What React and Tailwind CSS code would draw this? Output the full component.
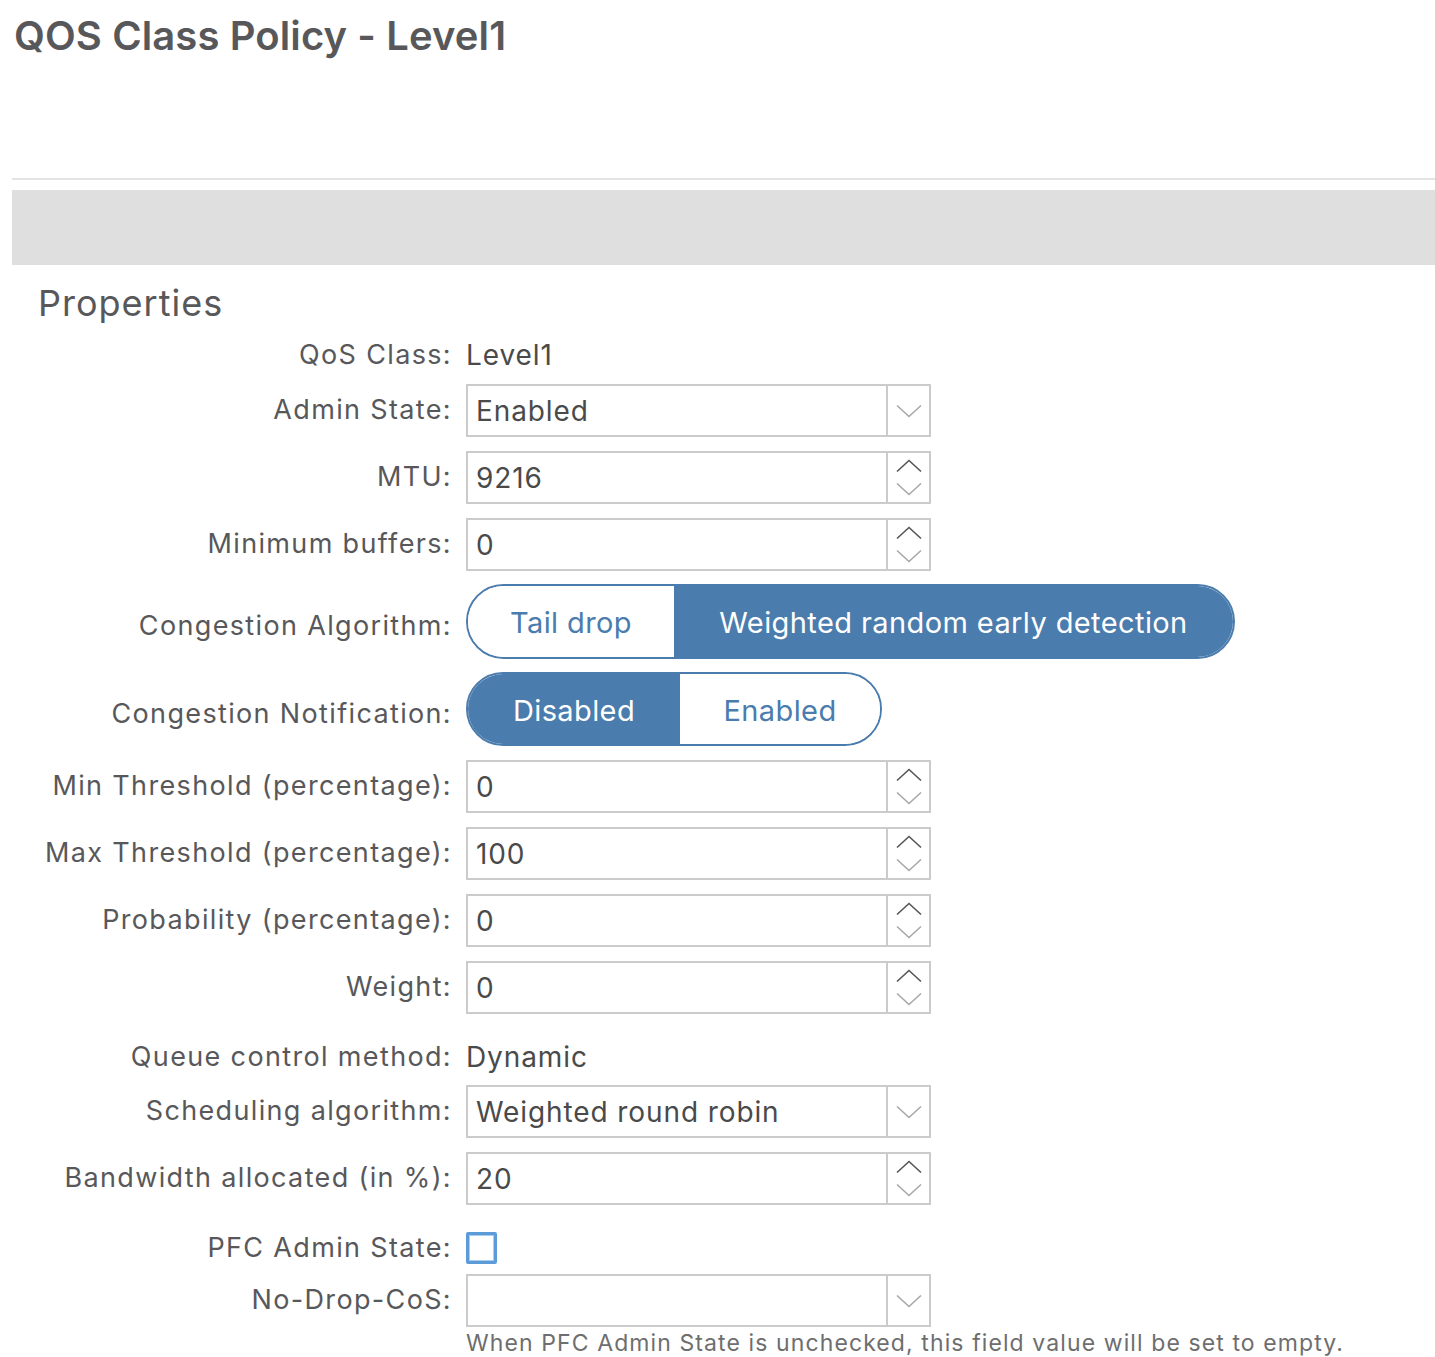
import React from "react";

const Chevron = ({ dir = "down", color = "#a8a8a8" }) => (
  <svg width="26" height="14" viewBox="0 0 26 14" fill="none">
    {dir === "down" ? (
      <path d="M1 1.5 L13 12.5 L25 1.5" stroke={color} strokeWidth="1.6" />
    ) : (
      <path d="M1 12.5 L13 1.5 L25 12.5" stroke={color} strokeWidth="1.6" />
    )}
  </svg>
);

const Row = ({ label, children, className = "", labelClass = "" }) => (
  <div className={`grid grid-cols-[452px_1fr] gap-x-[14px] items-center ${className}`}>
    <div className={`text-right text-[27px] text-[#58585b] tracking-[1.35px] whitespace-nowrap ${labelClass}`}>{label}</div>
    <div className="flex items-center">{children}</div>
  </div>
);

const Select = ({ value }) => (
  <div className="flex h-[53px] w-[465px] border-2 border-[#cbcbcb] bg-white">
    <div className="flex-1 flex items-center pl-[8px] text-[28px] text-[#4a4a4a] tracking-[0.9px]">{value}</div>
    <div className="w-[43px] border-l-2 border-[#cbcbcb] flex items-center justify-center">
      <Chevron dir="down" />
    </div>
  </div>
);

const Spin = ({ value }) => (
  <div className="flex h-[53px] w-[465px] border-2 border-[#cbcbcb] bg-white">
    <div className="flex-1 flex items-center pl-[8px] text-[28px] text-[#4a4a4a] tracking-[0.9px]">{value}</div>
    <div className="w-[43px] border-l-2 border-[#cbcbcb] flex flex-col items-center justify-center gap-[9px]">
      <Chevron dir="up" color="#555555" />
      <Chevron dir="down" color="#a8a8a8" />
    </div>
  </div>
);

const Toggle = ({ items, active, h }) => (
  <div className={`flex ${h} border-2 border-[#4a7cad] rounded-full overflow-hidden`}>
    {items.map((it, i) => (
      <div
        key={i}
        className={`${it.w} flex items-center justify-center pt-[3px] text-[29px] tracking-[0.4px] ${
          i === active ? "bg-[#4a7cad] text-white" : "bg-white text-[#4a7cad]"
        }`}
      >
        {it.label}
      </div>
    ))}
  </div>
);

export default function App() {
  return (
    <div className="font-['Inter',sans-serif] bg-white w-[1435px] h-[1357px] overflow-hidden">
      <div className="pl-[12px]">
        <div className="h-[178px] pl-[2px]">
          <h1 className="text-[40px] font-semibold text-[#58585b] leading-[72px] tracking-[0.1px]">
            QOS Class Policy - Level1
          </h1>
        </div>
        <div className="h-[2px] bg-[#e3e3e3]" />
        <div className="h-[10px]" />
        <div className="h-[75px] bg-[#dfdfdf]" />
        <div className="pl-[26px] mt-[18px] h-[40px] flex items-center text-[36px] text-[#58585b] tracking-[1px]">
          Properties
        </div>
      </div>

      <div className="flex flex-col">
        <Row label="QoS Class:" className="mt-[11px] h-[34px]">
          <span className="text-[28px] text-[#4a4a4a] tracking-[0.9px]">Level1</span>
        </Row>
        <Row label="Admin State:" className="mt-[16px]">
          <Select value="Enabled" />
        </Row>
        <Row label="MTU:" className="mt-[14px]">
          <Spin value="9216" />
        </Row>
        <Row label="Minimum buffers:" className="mt-[14px]">
          <Spin value="0" />
        </Row>
        <Row label="Congestion Algorithm:" className="mt-[13px]" labelClass="pt-[10px]">
          <Toggle
            h="h-[75px]"
            active={1}
            items={[
              { label: "Tail drop", w: "w-[206px]" },
              { label: "Weighted random early detection", w: "w-[559px]" },
            ]}
          />
        </Row>
        <Row label="Congestion Notification:" className="mt-[13px]" labelClass="pt-[10px]">
          <Toggle
            h="h-[74px]"
            active={0}
            items={[
              { label: "Disabled", w: "w-[212px]" },
              { label: "Enabled", w: "w-[200px]" },
            ]}
          />
        </Row>
        <Row label="Min Threshold (percentage):" className="mt-[14px]">
          <Spin value="0" />
        </Row>
        <Row label="Max Threshold (percentage):" className="mt-[14px]">
          <Spin value="100" />
        </Row>
        <Row label="Probability (percentage):" className="mt-[14px]">
          <Spin value="0" />
        </Row>
        <Row label="Weight:" className="mt-[14px]">
          <Spin value="0" />
        </Row>
        <Row label="Queue control method:" className="mt-[22px] h-[34px]">
          <span className="text-[28px] text-[#4a4a4a] tracking-[0.9px]">Dynamic</span>
        </Row>
        <Row label="Scheduling algorithm:" className="mt-[15px]">
          <Select value="Weighted round robin" />
        </Row>
        <Row label="Bandwidth allocated (in %):" className="mt-[14px]">
          <Spin value="20" />
        </Row>
        <Row label="PFC Admin State:" className="mt-[23px] h-[32px]">
          <div className="w-[31px] h-[32px] rounded-[2px] border-[3px] border-[#5b9bd8] bg-white shadow-[inset_0_0_0_1px_#a9cdef]" />
        </Row>
        <Row label="No-Drop-CoS:" className="mt-[14px]">
          <Select value="" />
        </Row>
        <div className="grid grid-cols-[452px_1fr] gap-x-[14px]">
          <div />
          <div className="text-[23px] text-[#6e6e6e] tracking-[1.1px] leading-[32px] whitespace-nowrap">
            When PFC Admin State is unchecked, this field value will be set to empty.
          </div>
        </div>
      </div>
    </div>
  );
}
